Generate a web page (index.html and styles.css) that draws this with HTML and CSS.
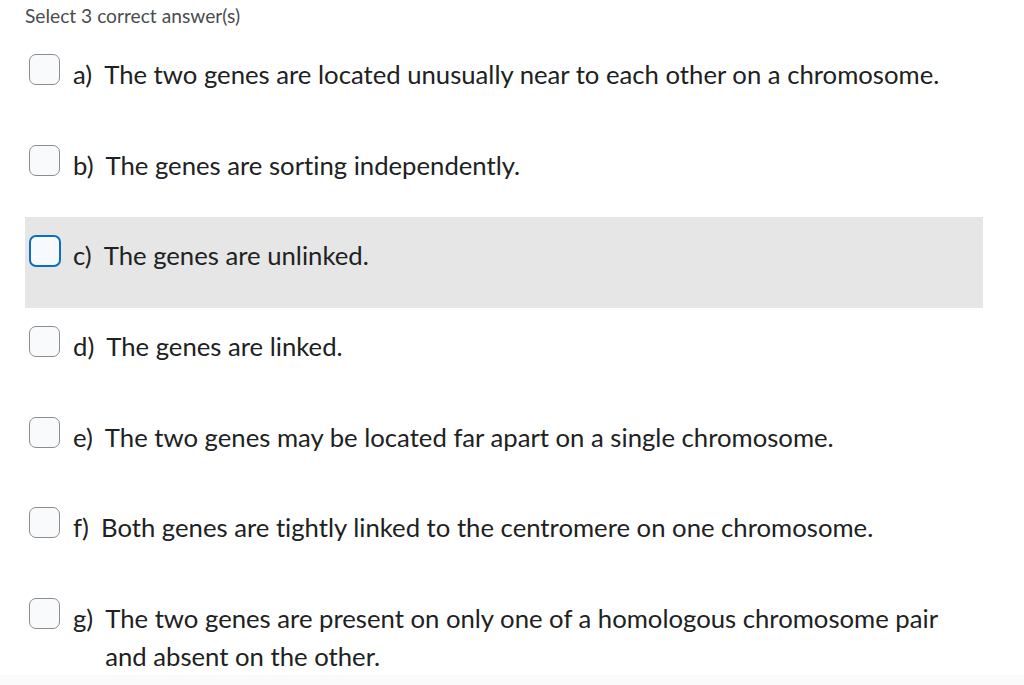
FILE: index.html
```html
<!DOCTYPE html>
<html>
<head>
<meta charset="utf-8">
<link rel="stylesheet" href="styles.css">
</head>
<body>
<div class="page">
  <div class="prompt">Select 3 correct answer(s)</div>
  <ul class="options">
    <li class="option"><span class="box"></span><span class="letter">a)</span><span class="text">The two genes are located unusually near to each other on a chromosome.</span></li>
    <li class="option"><span class="box"></span><span class="letter">b)</span><span class="text">The genes are sorting independently.</span></li>
    <li class="option hover"><span class="box focus"></span><span class="letter">c)</span><span class="text">The genes are unlinked.</span></li>
    <li class="option"><span class="box"></span><span class="letter">d)</span><span class="text">The genes are linked.</span></li>
    <li class="option"><span class="box"></span><span class="letter">e)</span><span class="text">The two genes may be located far apart on a single chromosome.</span></li>
    <li class="option"><span class="box"></span><span class="letter">f)</span><span class="text">Both genes are tightly linked to the centromere on one chromosome.</span></li>
    <li class="option"><span class="box"></span><span class="letter">g)</span><span class="text">The two genes are present on only one of a homologous chromosome pair and absent on the other.</span></li>
  </ul>
  <div class="footer"></div>
</div>
</body>
</html>
```

FILE: styles.css
```css
html, body {
  margin: 0;
  padding: 0;
  background: #ffffff;
  font-family: Lato, "Noto Sans", sans-serif;
  font-variant-ligatures: none;
}
.page {
  padding: 0 41px 0 25px;
}
.prompt {
  font-size: 19.2px;
  line-height: 22px;
  color: #494c4e;
  padding-top: 5px;
  height: 31px;
}
.options {
  list-style: none;
  margin: 0;
  padding: 0;
}
.option {
  display: flex;
  align-items: flex-start;
  box-sizing: border-box;
  min-height: 90.67px;
  padding: 19px 0 0 4px;
  font-size: 25.7px;
  line-height: 38px;
  color: #202122;
}
.option.hover {
  background: #e6e6e6;
}
.box {
  flex: none;
  box-sizing: border-box;
  width: 31px;
  height: 31px;
  margin-top: -1px;
  border: 1px solid #8a8c8f;
  border-radius: 7px;
  background: #f9fafc;
  margin-right: 13px;
}
.box.focus {
  width: 32px;
  height: 32px;
  border: 2px solid #0a6fc2;
  background: #f6f9fe;
  margin-right: 12px;
}
.letter {
  flex: none;
  margin-right: 12px;
}
.text {
  flex: 1;
  padding-right: 30px;
}
.footer {
  height: 20px;
  background: #fafafa;
  margin: 0 -41px 0 -25px;
}
```
